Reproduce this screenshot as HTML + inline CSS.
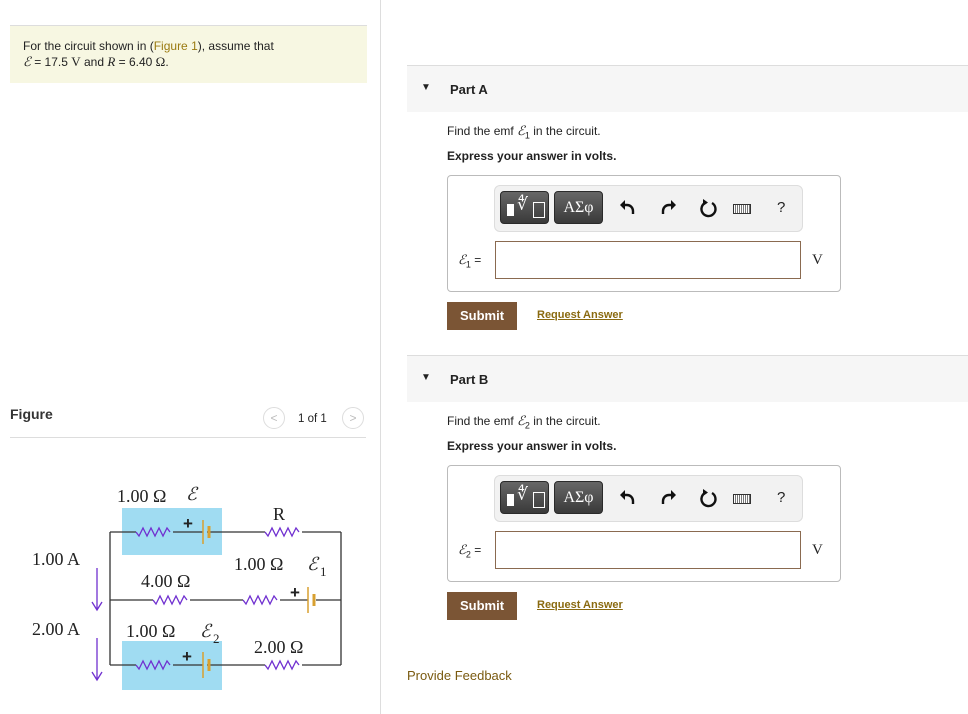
<!DOCTYPE html>
<html><head><style>
body{margin:0;width:968px;height:714px;background:#fff;font-family:"Liberation Sans",sans-serif;position:relative;overflow:hidden;color:#222}
.a{position:absolute}
.s{font-size:12px}
.serif{font-family:"Liberation Serif",serif}
.btn{position:absolute;width:49px;height:33px;border-radius:4px;background:linear-gradient(#666,#3a3a3a);border:1px solid #2a2a2a;color:#fff;box-sizing:border-box}
.sub{position:absolute;width:70px;height:28px;background:#7b5535;color:#fff;font-size:13px;font-weight:bold;text-align:center;line-height:28px}
.req{position:absolute;color:#8a6a10;font-size:11px;font-weight:bold;text-decoration:underline}
</style></head><body>
<div class="a" style="left:10px;top:25px;width:357px;height:1px;background:#ddd"></div>
<div class="a" style="left:10px;top:26px;width:357px;height:57px;background:#f7f7e2"></div>
<div class="a s" style="left:23px;top:39px;line-height:15px">For the circuit shown in (<span style="color:#9a7a10">Figure 1</span>), assume that<br><span class="serif" style="font-style:italic;font-size:13px">ℰ</span> = 17.5 <span class="serif" style="font-size:13px">V</span> and <span class="serif" style="font-style:italic;font-size:13px">R</span> = 6.40 <span class="serif" style="font-size:13px">Ω</span>.</div>
<div class="a" style="left:380px;top:0;width:1px;height:714px;background:#ddd"></div>
<div class="a" style="left:10px;top:406px;font-size:14px;font-weight:bold;color:#333">Figure</div>
<div class="a" style="left:263px;top:407px;width:22px;height:22px;border:1px solid #ddd;border-radius:50%;box-sizing:border-box;color:#bbb;font-size:12px;text-align:center;line-height:20px">&lt;</div>
<div class="a" style="left:298px;top:413px;font-size:11.5px">1 of 1</div>
<div class="a" style="left:342px;top:407px;width:22px;height:22px;border:1px solid #ddd;border-radius:50%;box-sizing:border-box;color:#bbb;font-size:12px;text-align:center;line-height:20px">&gt;</div>
<div class="a" style="left:10px;top:437px;width:356px;height:1px;background:#ddd"></div>
<svg class="a" style="left:0;top:470px" width="370" height="230" viewBox="0 470 370 230" font-family="Liberation Serif,serif" font-size="18">
<rect x="122" y="508" width="100" height="47" fill="#a0dcf2"/>
<rect x="122" y="641" width="100" height="49" fill="#a0dcf2"/>
<g stroke="#333" stroke-width="1.3" fill="none">
<path d="M110 532V665M341 532V665M110 532H136M173 532H203M207 532H265M302 532H341M110 600H153M190 600H243M280 600H308M316 600H341M110 665H136M173 665H203M207 665H265M302 665H341"/>
</g>
<g stroke="#7030d0" stroke-width="1.3" fill="none">
<path d="M136 532l3 4 4-8 4 8 4-8 4 8 4-8 4 8 4-8 3 4"/>
<path d="M265 532l3 4 4-8 4 8 4-8 4 8 4-8 4 8 4-8 3 4"/>
<path d="M153 600l3 4 4-8 4 8 4-8 4 8 4-8 4 8 4-8 3 4"/>
<path d="M243 600l3 4 4-8 4 8 4-8 4 8 4-8 4 8 4-8 3 4"/>
<path d="M136 665l3 4 4-8 4 8 4-8 4 8 4-8 4 8 4-8 3 4"/>
<path d="M265 665l3 4 4-8 4 8 4-8 4 8 4-8 4 8 4-8 3 4"/>
<path d="M97 568v42M92 602l5 8 5-8M97 638v42M92 672l5 8 5-8"/>
</g>
<g stroke="#d8a030" stroke-width="1.5">
<path d="M203 520v24M308 587v26M203 652v26"/></g>
<g stroke="#d8a030" stroke-width="3"><path d="M209 526v12M314 594v12M209 659v12"/></g>
<g fill="#222">
<text x="117" y="502">1.00 Ω</text><text x="186" y="500" font-style="italic">ℰ</text>
<text x="273" y="520">R</text>
<text x="32" y="565">1.00 A</text>
<text x="234" y="570">1.00 Ω</text><text x="307" y="570" font-style="italic">ℰ</text><text x="320" y="576" font-size="13">1</text>
<text x="141" y="587">4.00 Ω</text>
<text x="32" y="635">2.00 A</text>
<text x="126" y="637">1.00 Ω</text><text x="200" y="637" font-style="italic">ℰ</text><text x="213" y="643" font-size="13">2</text>
<text x="254" y="653">2.00 Ω</text>
<g font-family="Liberation Sans,sans-serif" font-weight="bold" font-size="17"><text x="183" y="529">+</text><text x="290" y="598">+</text><text x="182" y="662">+</text></g>
</g>
</svg>

<div class="a" style="left:407px;top:65px;width:561px;height:1px;background:#ddd"></div>
<div class="a" style="left:407px;top:66px;width:561px;height:46px;background:#f6f6f6"></div>
<div class="a" style="left:421px;top:82px;font-size:10px">▼</div>
<div class="a" style="left:450px;top:82px;font-size:13px;font-weight:bold">Part A</div>
<div class="a s" style="left:447px;top:123px">Find the emf <i class="serif" style="font-size:13px">ℰ</i><sub style="font-size:9px">1</sub> in the circuit.</div>
<div class="a s" style="left:447px;top:149px;font-weight:bold">Express your answer in volts.</div>
<div class="a" style="left:447px;top:175px;width:394px;height:117px;border:1px solid #bbb;border-radius:4px;box-sizing:border-box"></div>
<div class="a" style="left:494px;top:185px;width:309px;height:47px;background:#f2f2f2;border:1px solid #ddd;border-radius:6px;box-sizing:border-box"></div>
<div class="btn" style="left:500px;top:191px"><div class="a" style="left:6px;top:12px;width:7px;height:12px;background:#fff"></div><span class="a serif" style="left:16px;top:3px;font-size:17px">∜</span><div class="a" style="left:32px;top:10px;width:10px;height:14px;border:1px solid #fff"></div></div>
<div class="btn serif" style="left:554px;top:191px;font-size:16px;text-align:center;line-height:31px">ΑΣφ</div>
<svg class="a" style="left:618px;top:198px" width="100" height="20" viewBox="0 0 100 20"><g fill="none" stroke="#111" stroke-width="2.4"><path d="M6 7h3a6 6 0 0 1 6 6v3"/><path d="M54 7h-3a6 6 0 0 0-6 6v3"/><path d="M94 5a7 7 0 1 1-6-0.5"/></g><g fill="#111"><path d="M2 7l5-5v10z"/><path d="M58 7l-5-5v10z"/><path d="M85 1l5 3.5-5 3.5z"/></g></svg>
<div class="a" style="left:733px;top:204px;width:18px;height:10px;border:1px solid #333;box-sizing:border-box;background:repeating-linear-gradient(90deg,#fff 0 1px,#777 1px 2px)"></div>
<div class="a" style="left:777px;top:199px;font-size:15px">?</div>
<div class="a" style="left:458px;top:252px;font-size:12px"><i class="serif" style="font-size:13px">ℰ</i><sub style="font-size:9px">1</sub> =</div>
<div class="a" style="left:495px;top:241px;width:306px;height:38px;border:1px solid #8a6a50;box-sizing:border-box"></div>
<div class="a serif" style="left:812px;top:252px;font-size:15px">V</div>
<div class="sub" style="left:447px;top:302px">Submit</div>
<div class="req" style="left:537px;top:309px">Request Answer</div>

<div class="a" style="left:407px;top:355px;width:561px;height:1px;background:#ddd"></div>
<div class="a" style="left:407px;top:356px;width:561px;height:46px;background:#f6f6f6"></div>
<div class="a" style="left:421px;top:372px;font-size:10px">▼</div>
<div class="a" style="left:450px;top:372px;font-size:13px;font-weight:bold">Part B</div>
<div class="a s" style="left:447px;top:413px">Find the emf <i class="serif" style="font-size:13px">ℰ</i><sub style="font-size:9px">2</sub> in the circuit.</div>
<div class="a s" style="left:447px;top:439px;font-weight:bold">Express your answer in volts.</div>
<div class="a" style="left:447px;top:465px;width:394px;height:117px;border:1px solid #bbb;border-radius:4px;box-sizing:border-box"></div>
<div class="a" style="left:494px;top:475px;width:309px;height:47px;background:#f2f2f2;border:1px solid #ddd;border-radius:6px;box-sizing:border-box"></div>
<div class="btn" style="left:500px;top:481px"><div class="a" style="left:6px;top:12px;width:7px;height:12px;background:#fff"></div><span class="a serif" style="left:16px;top:3px;font-size:17px">∜</span><div class="a" style="left:32px;top:10px;width:10px;height:14px;border:1px solid #fff"></div></div>
<div class="btn serif" style="left:554px;top:481px;font-size:16px;text-align:center;line-height:31px">ΑΣφ</div>
<svg class="a" style="left:618px;top:488px" width="100" height="20" viewBox="0 0 100 20"><g fill="none" stroke="#111" stroke-width="2.4"><path d="M6 7h3a6 6 0 0 1 6 6v3"/><path d="M54 7h-3a6 6 0 0 0-6 6v3"/><path d="M94 5a7 7 0 1 1-6-0.5"/></g><g fill="#111"><path d="M2 7l5-5v10z"/><path d="M58 7l-5-5v10z"/><path d="M85 1l5 3.5-5 3.5z"/></g></svg>
<div class="a" style="left:733px;top:494px;width:18px;height:10px;border:1px solid #333;box-sizing:border-box;background:repeating-linear-gradient(90deg,#fff 0 1px,#777 1px 2px)"></div>
<div class="a" style="left:777px;top:489px;font-size:15px">?</div>
<div class="a" style="left:458px;top:542px;font-size:12px"><i class="serif" style="font-size:13px">ℰ</i><sub style="font-size:9px">2</sub> =</div>
<div class="a" style="left:495px;top:531px;width:306px;height:38px;border:1px solid #8a6a50;box-sizing:border-box"></div>
<div class="a serif" style="left:812px;top:542px;font-size:15px">V</div>
<div class="sub" style="left:447px;top:592px">Submit</div>
<div class="req" style="left:537px;top:599px">Request Answer</div>

<div class="a" style="left:407px;top:668px;font-size:13px;color:#7a5a10">Provide Feedback</div>
</body></html>
